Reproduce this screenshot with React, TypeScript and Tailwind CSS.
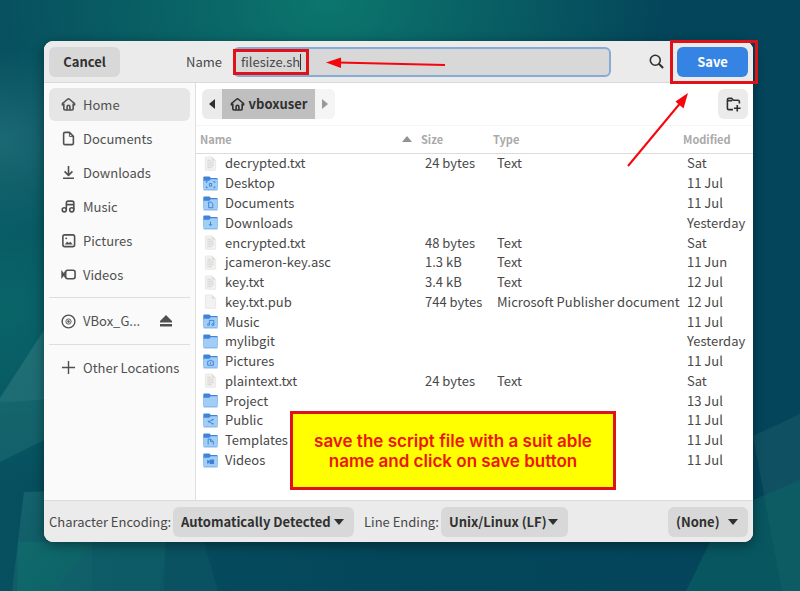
import type { ReactNode } from "react";
import clsx from "clsx";

type Emblem = "desktop" | "document" | "download" | "music" | "camera" | "share" | "template" | "video";

type Entry = {
  name: string;
  kind: "folder" | "text" | "blank";
  emblem?: Emblem;
  size?: string;
  type?: string;
  modified: string;
};

const entries: Entry[] = [
  { name: "decrypted.txt", kind: "text", size: "24 bytes", type: "Text", modified: "Sat" },
  { name: "Desktop", kind: "folder", emblem: "desktop", modified: "11 Jul" },
  { name: "Documents", kind: "folder", emblem: "document", modified: "11 Jul" },
  { name: "Downloads", kind: "folder", emblem: "download", modified: "Yesterday" },
  { name: "encrypted.txt", kind: "text", size: "48 bytes", type: "Text", modified: "Sat" },
  { name: "jcameron-key.asc", kind: "text", size: "1.3 kB", type: "Text", modified: "11 Jun" },
  { name: "key.txt", kind: "text", size: "3.4 kB", type: "Text", modified: "12 Jul" },
  { name: "key.txt.pub", kind: "blank", size: "744 bytes", type: "Microsoft Publisher document", modified: "12 Jul" },
  { name: "Music", kind: "folder", emblem: "music", modified: "11 Jul" },
  { name: "mylibgit", kind: "folder", modified: "Yesterday" },
  { name: "Pictures", kind: "folder", emblem: "camera", modified: "11 Jul" },
  { name: "plaintext.txt", kind: "text", size: "24 bytes", type: "Text", modified: "Sat" },
  { name: "Project", kind: "folder", modified: "13 Jul" },
  { name: "Public", kind: "folder", emblem: "share", modified: "11 Jul" },
  { name: "Templates", kind: "folder", emblem: "template", modified: "11 Jul" },
  { name: "Videos", kind: "folder", emblem: "video", modified: "11 Jul" },
];

function Symbolic({ children }: { children: ReactNode }) {
  return (
    <svg
      viewBox="0 0 16 16"
      className="size-[15px] shrink-0"
      fill="none"
      stroke="currentColor"
      strokeWidth="1.7"
      strokeLinejoin="round"
      aria-hidden="true"
    >
      {children}
    </svg>
  );
}

const homeIcon = (
  <Symbolic>
    <path d="M1.500 8.500V7.700q0-.8.700-1.300L7 2.400q1-.8 2 0l4.800 4q.7.500.7 1.300v.8" strokeLinecap="round" />
    <path d="M3 7v5.500q0 1.300 1.300 1.300h7.400q1.300 0 1.300-1.300V7" />
    <path d="M6.500 13.500V10.300q0-1.500 1.500-1.500t1.500 1.500v3.200" />
  </Symbolic>
);

const documentIcon = (
  <Symbolic>
    <path d="M4.300 1.500H9l4.200 4.200v7.300q0 1.500-1.500 1.500H4.300q-1.500 0-1.500-1.500V3q0-1.500 1.500-1.500Z" />
    <path d="M9 2v3.800h3.800" strokeWidth="1" />
  </Symbolic>
);

const downloadIcon = (
  <Symbolic>
    <path d="M8 1v9.500M3.800 6.800 8 11l4.200-4.200M2.200 14.200h11.600" />
  </Symbolic>
);

const musicIcon = (
  <Symbolic>
    <circle cx="3.500" cy="11.500" r="2.200" />
    <circle cx="11.500" cy="11.500" r="2.200" />
    <path d="M5.700 11.500V4.300q0-2 2-2h4q2 0 2 2v7.200M5.700 6h8" />
  </Symbolic>
);

const pictureIcon = (
  <Symbolic>
    <rect x="2" y="2" width="12.500" height="12.500" rx="2" />
    <path d="m4 12.200 2.600-3.200 1.700 1.700 1.700-1.500 2.500 3Z" fill="currentColor" stroke="none" />
    <circle cx="5.500" cy="5.700" r="1" fill="currentColor" stroke="none" />
  </Symbolic>
);

const videoIcon = (
  <Symbolic>
    <path d="M.3 3.300v9.400l4-4.700Z" fill="currentColor" stroke="none" />
    <path d="M3.800 5v6" strokeWidth="1" />
    <rect x="5" y="3.500" width="10" height="9" rx="2" />
  </Symbolic>
);

const discIcon = (
  <Symbolic>
    <circle cx="8" cy="8" r="6.800" strokeWidth="1.500" />
    <circle cx="8" cy="8" r="2.800" strokeWidth="1" />
    <circle cx="8" cy="8" r="1.300" fill="currentColor" stroke="none" />
  </Symbolic>
);

const plusIcon = (
  <Symbolic>
    <path d="M8 1v14M1 8h14" strokeWidth="1.500" />
  </Symbolic>
);

const places = [
  { label: "Home", icon: homeIcon },
  { label: "Documents", icon: documentIcon },
  { label: "Downloads", icon: downloadIcon },
  { label: "Music", icon: musicIcon },
  { label: "Pictures", icon: pictureIcon },
  { label: "Videos", icon: videoIcon },
];

const emblems: Record<Emblem, ReactNode> = {
  desktop: (
    <path d="M3.500 7.500V6H5M11 6h1.500v1.500M12.500 11v1.500H11M5 12.500H3.500V11M6.800 8h2.400v2.800H6.800Z" />
  ),
  document: <path d="M6 6.500h2.700l1.800 1.800v4.200H6Z" />,
  download: <path d="M8 7v4M6.300 9.700 8 11.500l1.700-1.800" />,
  music: (
    <path d="M6.800 11.300V6.800h4.700v4.500M6.800 11.300a1 1 0 1 1-2 0 1 1 0 0 1 2 0ZM11.500 11.300a1 1 0 1 1-2 0 1 1 0 0 1 2 0Z" />
  ),
  camera: <path d="M5 7.700h1.500l.7-1h1.600l.7 1H11V12H5ZM8 8.700v2" />,
  share: <path d="m10.500 7-4.500 2.200 4.500 2.300M10 6.800h.8v.7H10ZM5.500 8.800h.8v.7h-.8ZM10 11.200h.8v.7H10Z" />,
  template: <path d="M5.500 12.300V6.500h2.700l2.800 2.800v3M8 6.500v2.700h2.500" />,
  video: (
    <>
      <rect x="7.500" y="7.500" width="3.800" height="3.800" fill="#3b80d6" />
      <path d="M5 7.800V11l2-1.600Z" fill="#3b80d6" />
    </>
  ),
};

function FolderIcon({ emblem }: { emblem?: Emblem }) {
  return (
    <svg viewBox="0 0 16 16" className="size-[15px] shrink-0" aria-hidden="true">
      <path d="M1.500.5h5q.7 0 1.100.6l.6.9h6.300q1.200 0 1.200 1.200V13H.3V1.700Q.3.500 1.500.5Z" fill="#3f84d9" />
      <path d="M.3 6q0-.9.900-.9h5.400L8.300 3.500h6.500q.9 0 .9.900v9.600q0 1.200-1.200 1.200h-13q-1.200 0-1.200-1.200Z" fill="#a2cef6" />
      <path d="M.6 14.800h14.800" stroke="#6fa5e4" strokeWidth=".8" />
      {emblem && (
        <g fill="none" stroke="#3b80d6" strokeWidth="1">
          {emblems[emblem]}
        </g>
      )}
    </svg>
  );
}

function FileIcon({ lined }: { lined: boolean }) {
  return (
    <svg viewBox="0 0 16 16" className="size-[15px] shrink-0" aria-hidden="true">
      <path d="M3 1h6.500L13.500 5v9.500q0 .8-.8.800H3.300q-.8 0-.8-.8V1.500Z" fill="#f3f2f1" stroke="#e2e1df" strokeWidth=".7" />
      <path d="M9.500 1v4h4Z" fill="#dddcda" />
      {lined && <path d="M4.500 4.500h4M4.500 6.500h7M4.500 8.500h7M4.500 10.500h7M4.500 12.500h5" stroke="#cfcecc" strokeWidth=".9" />}
    </svg>
  );
}

function Wallpaper() {
  return (
    <svg
      viewBox="0 0 800 591"
      preserveAspectRatio="none"
      className="absolute inset-0 size-full"
      aria-hidden="true"
    >
      <defs>
        <linearGradient id="base" x1="0" y1="0" x2="1" y2="0">
          <stop offset="0" stopColor="#07505f" />
          <stop offset=".5" stopColor="#04465a" />
          <stop offset="1" stopColor="#04455b" />
        </linearGradient>
        <radialGradient id="glow" cx=".41" cy="0" r=".42">
          <stop offset="0" stopColor="#0c766d" />
          <stop offset="1" stopColor="#0c766d" stopOpacity="0" />
        </radialGradient>
        <radialGradient id="haze" cx="0" cy=".24" r=".16">
          <stop offset="0" stopColor="#2a7a82" stopOpacity=".6" />
          <stop offset="1" stopColor="#2a7a82" stopOpacity="0" />
        </radialGradient>
        <radialGradient id="side" cx="0" cy=".52" r=".3">
          <stop offset="0" stopColor="#0a6a6b" stopOpacity=".8" />
          <stop offset="1" stopColor="#0a6a6b" stopOpacity="0" />
        </radialGradient>
        <linearGradient id="facet" x1="0" y1="0" x2="1" y2="1">
          <stop offset="0" stopColor="#2f8a86" stopOpacity=".35" />
          <stop offset="1" stopColor="#12636b" stopOpacity=".35" />
        </linearGradient>
      </defs>
      <rect width="800" height="591" fill="url(#base)" />
      <rect width="800" height="591" fill="url(#glow)" />
      <rect width="800" height="591" fill="url(#haze)" />
      <rect width="800" height="591" fill="url(#side)" />
      <path d="M0 398 44 330v69L0 403Z" fill="#3a8288" fillOpacity=".45" />
      <path d="m0 403 44-5v42L0 462Z" fill="#2a7c7e" fillOpacity=".35" />
      <path d="M24 492 92 490v101H12Z" fill="url(#facet)" />
      <path d="M18 542h72l-36 49H17Z" fill="#0d7a70" fillOpacity=".35" />
      <path d="m90 542-38 49h112l2-49Z" fill="#14686e" fillOpacity=".55" />
      <path d="m166 542-6 49h58l-14-49Z" fill="#0d5564" fillOpacity=".6" />
      <path d="m753 436 47-22v177h-18Z" fill="#195d6c" fillOpacity=".5" />
      <path d="m710 542-24 49h114V480l-47 20Z" fill="#0b6866" fillOpacity=".5" />
    </svg>
  );
}

function Dropdown({ id, label, value, className }: { id: string; label?: string; value: string; className: string }) {
  return (
    <span className="grid">
      <select
        id={id}
        aria-label={label}
        className={clsx(
          "col-start-1 row-start-1 h-[30px] appearance-none rounded-md bg-[#d8d8d8] pl-2 font-bold text-[#303030]",
          className,
        )}
      >
        <option>{value}</option>
      </select>
      <svg
        viewBox="0 0 10 6"
        className="pointer-events-none col-start-1 row-start-1 mr-2.5 h-1.5 w-2.5 self-center justify-self-end fill-[#303030]"
        aria-hidden="true"
      >
        <path d="M0 0h10L5 6Z" />
      </svg>
    </span>
  );
}

function Sidebar() {
  return (
    <nav className="w-[152px] shrink-0 border-r border-[#dfdfdf] bg-[#fafafa] px-[5px] pt-[5px] text-[#505050]">
      <ul className="flex flex-col gap-px">
        {places.map((place, i) => (
          <li key={place.label}>
            <a
              href="#"
              className={clsx("flex h-[33px] items-center gap-[7px] rounded-md pl-3", i === 0 && "bg-[#e6e6e6]")}
            >
              {place.icon}
              {place.label}
            </a>
          </li>
        ))}
      </ul>
      <div className="my-1.5 flex h-12 items-center border-y border-[#dedede] pr-4 pl-3">
        <a href="#" className="flex flex-1 items-center gap-[7px]">
          {discIcon}
          VBox_G...
        </a>
        <button type="button" aria-label="Eject">
          <svg viewBox="0 0 16 16" className="size-4 fill-current" aria-hidden="true">
            <path d="m8 2 6 6v1.500H2V8ZM2 11h12v2.500H2Z" />
          </svg>
        </button>
      </div>
      <a href="#" className="flex h-[33px] items-center gap-[7px] pl-3">
        {plusIcon}
        Other Locations
      </a>
    </nav>
  );
}

function PathBar() {
  return (
    <div className="flex h-[43px] shrink-0 items-center justify-between border-b border-[#f5f5f5] pr-[5px] pl-1.5">
      <div className="flex h-[30px] overflow-hidden rounded-md bg-[#ebebeb] text-[#303030]">
        <button type="button" aria-label="Back" className="flex w-5 items-center justify-center">
          <svg viewBox="0 0 6 10" className="h-2.5 w-1.5 fill-current" aria-hidden="true">
            <path d="M6 0v10L0 5Z" />
          </svg>
        </button>
        <button type="button" className="flex w-[93px] items-center justify-center gap-1 bg-[#bfbfbf] font-bold">
          {homeIcon}
          vboxuser
        </button>
        <button type="button" aria-label="Forward" className="flex w-5 items-center justify-center bg-[#f5f5f5] text-[#999]">
          <svg viewBox="0 0 6 10" className="h-2.5 w-1.5 fill-current" aria-hidden="true">
            <path d="M0 0v10l6-5Z" />
          </svg>
        </button>
      </div>
      <button
        type="button"
        aria-label="New folder"
        className="flex size-[30px] items-center justify-center rounded-md bg-[#ebebeb] text-[#303030]"
      >
        <Symbolic>
          <path d="M7.500 13.500H3Q1.500 13.500 1.500 12V3Q1.500 1.500 3 1.500h3l1.800 2h5q1.500 0 1.500 1.500v2M12 8.500V15.500M8.500 12h7M1.500 4h5" />
        </Symbolic>
      </button>
    </div>
  );
}

function FileTable() {
  return (
    <table className="h-[344px] w-full table-fixed border-collapse text-left leading-4 whitespace-nowrap">
      <colgroup>
        <col />
        <col className="w-[72px]" />
        <col className="w-[190px]" />
        <col className="w-[70px]" />
      </colgroup>
      <thead>
        <tr className="h-[27px] border-b border-[#dcdcdc] text-[11px] text-[#a9a9a9]">
          <th className="p-0 pl-1 font-bold">
            <span className="flex items-center justify-between pr-[9px]">
              Name
              <svg viewBox="0 0 10 6" className="h-1.5 w-2.5 fill-[#929292]" aria-hidden="true">
                <path d="M5 0 10 6H0Z" />
              </svg>
            </span>
          </th>
          <th className="p-0 font-bold">Size</th>
          <th className="p-0 font-bold">Type</th>
          <th className="p-0 font-bold">Modified</th>
        </tr>
      </thead>
      <tbody>
        {entries.map((entry) => (
          <tr key={entry.name}>
            <td className="p-0 pl-[7px]">
              <span className="flex items-center gap-[7px]">
                {entry.kind === "folder" ? (
                  <FolderIcon emblem={entry.emblem} />
                ) : (
                  <FileIcon lined={entry.kind === "text"} />
                )}
                {entry.name}
              </span>
            </td>
            <td className="p-0 pl-1">{entry.size}</td>
            <td className="p-0 pl-1">{entry.type}</td>
            <td className="p-0 pl-1">{entry.modified}</td>
          </tr>
        ))}
      </tbody>
    </table>
  );
}

export default function App() {
  return (
    <div className="relative min-h-screen overflow-hidden pt-[41px] pr-[47px] pb-12 pl-11 font-['Noto_Sans_CJK_SC','Noto_Sans',sans-serif] text-[13px] leading-5 text-[#484848]">
      <Wallpaper />
      <main className="relative flex flex-col rounded-[9px] bg-white shadow-[0_3px_12px_rgba(0,0,0,0.4)]">
        <header className="flex h-[42px] items-center rounded-t-[9px] border-b border-[#d9d9d9] bg-[#ebebeb] px-[5px]">
          <button type="button" className="h-[30px] w-[71px] rounded-md bg-[#d8d8d8] font-bold text-[#303030]">
            Cancel
          </button>
          <label htmlFor="filename" className="w-[113px] pl-[66px]">
            Name
          </label>
          <div className="relative flex-1">
            <input
              id="filename"
              defaultValue="filesize.sh"
              className="block h-[30px] w-full rounded-md border-2 border-[#88abd6] bg-[#d8d8d8] px-1.5 outline-none"
            />
            {/* text cursor and highlight around the file name */}
            <span className="absolute top-[7px] left-[67px] h-4 w-px bg-[#303030]" />
            <span className="absolute top-0.5 left-0 h-[26px] w-[76px] border-3 border-[#df1119]" />
            <svg viewBox="0 0 120 12" className="absolute top-2.5 left-[93px] h-3 w-[120px]" aria-hidden="true">
              <path d="M12 5.500 119 8" stroke="#f4060b" strokeWidth="2" />
              <path d="M0 5.500 15 .5v10.500Z" fill="#f4060b" />
            </svg>
          </div>
          <button type="button" aria-label="Search" className="ml-[38px] text-[#303030]">
            <Symbolic>
              <circle cx="6.700" cy="6.700" r="5.300" />
              <path d="m10.500 10.500 4.500 4.500" strokeWidth="2.200" />
            </Symbolic>
          </button>
          <div className="relative ml-[13px]">
            <button type="button" className="h-[30px] w-[71px] rounded-md bg-[#3584e4] font-bold text-white">
              Save
            </button>
            <span className="pointer-events-none absolute -top-[7px] -left-[7px] h-11 w-[88px] border-3 border-[#df1119]" />
            {/* arrow pointing at the button */}
            <svg viewBox="0 0 64 76" className="pointer-events-none absolute top-11 -left-[51px] z-10 h-[76px] w-16" aria-hidden="true">
              <path d="M2 75 56 10" stroke="#f4060b" strokeWidth="2" />
              <path d="m62 2-4.500 15.500-8-7Z" fill="#f4060b" />
            </svg>
          </div>
        </header>

        <div className="flex h-[417px]">
          <Sidebar />
          <section className="relative flex min-w-0 flex-1 flex-col">
            <PathBar />
            <FileTable />
            <p className="absolute top-[328px] left-[94px] flex h-[79px] w-[326px] items-center justify-center border-3 border-[#df1119] bg-[#ffff00] text-center font-['Inter',sans-serif] text-[17px] leading-5 font-semibold text-[#ee1508]">
              save the script file with a suit able
              <br />
              name and click on save button
            </p>
          </section>
        </div>

        <footer className="flex h-[42px] items-center rounded-b-[9px] border-t border-[#dadada] bg-[#ebebeb] px-[5px]">
          <label htmlFor="encoding" className="w-[124px]">
            Character Encoding:
          </label>
          <Dropdown id="encoding" value="Automatically Detected" className="w-[181px]" />
          <label htmlFor="ending" className="w-[87px] pl-2.5">
            Line Ending:
          </label>
          <Dropdown id="ending" value="Unix/Linux (LF)" className="w-[127px]" />
          <span className="ml-auto">
            <Dropdown id="compression" label="Compression" value="(None)" className="w-20" />
          </span>
        </footer>
      </main>
    </div>
  );
}
